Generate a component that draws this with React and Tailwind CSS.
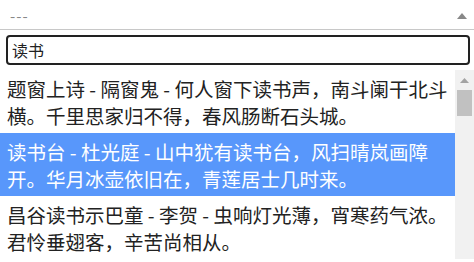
import React from "react";

const items = [
  "题窗上诗 - 隔窗鬼 - 何人窗下读书声，南斗阑干北斗横。千里思家归不得，春风肠断石头城。",
  "读书台 - 杜光庭 - 山中犹有读书台，风扫晴岚画障开。华月冰壶依旧在，青莲居士几时来。",
  "昌谷读书示巴童 - 李贺 - 虫响灯光薄，宵寒药气浓。君怜垂翅客，辛苦尚相从。",
];

export default function App() {
  return (
    <div
      className="w-[474px] h-[262px] overflow-hidden bg-white"
      style={{ fontFamily: '"Noto Sans CJK SC", "Noto Sans", sans-serif' }}
    >
      {/* selection */}
      <div className="h-[30px] flex items-center justify-between pl-[10px] pr-[7px] pt-[2px] border-b border-[#c8c8c8]">
        <span className="text-[15px] leading-[20px] text-[#888] tracking-[1px]">---</span>
        <svg width="10" height="6" viewBox="0 0 10 6">
          <polygon points="0,6 10,6 5,0" fill="#888" />
        </svg>
      </div>
      {/* search */}
      <div className="px-[6px] pt-[5px] pb-[5px]">
        <input
          readOnly
          value="读书"
          className="block w-[464px] h-[30px] border-2 border-[#222] rounded-[4px] px-[4px] text-[16px] text-[#222] outline-none"
          style={{ fontFamily: '"Noto Sans CJK SC", sans-serif' }}
        />
      </div>
      {/* results */}
      <div className="flex">
        <div className="w-[455px] shrink-0">
          {items.map((t, i) => (
            <div
              key={i}
              className={
                "pl-[7px] pr-[5px] pt-[5px] pb-[4px] text-[19.5px] leading-[27px] " +
                (i === 1 ? "bg-[#5897fb] text-white" : "text-[#222]")
              }
            >
              {t}
            </div>
          ))}
        </div>
        <div className="w-[19px] bg-[#f1f1f1] flex flex-col items-center">
          <svg width="9" height="5" viewBox="0 0 9 5" className="mt-[8px]">
            <polygon points="0,5 9,5 4.5,0" fill="#a3a3a3" />
          </svg>
          <div className="w-[15px] h-[26px] bg-[#c1c1c1] mt-[7px]" />
        </div>
      </div>
    </div>
  );
}
